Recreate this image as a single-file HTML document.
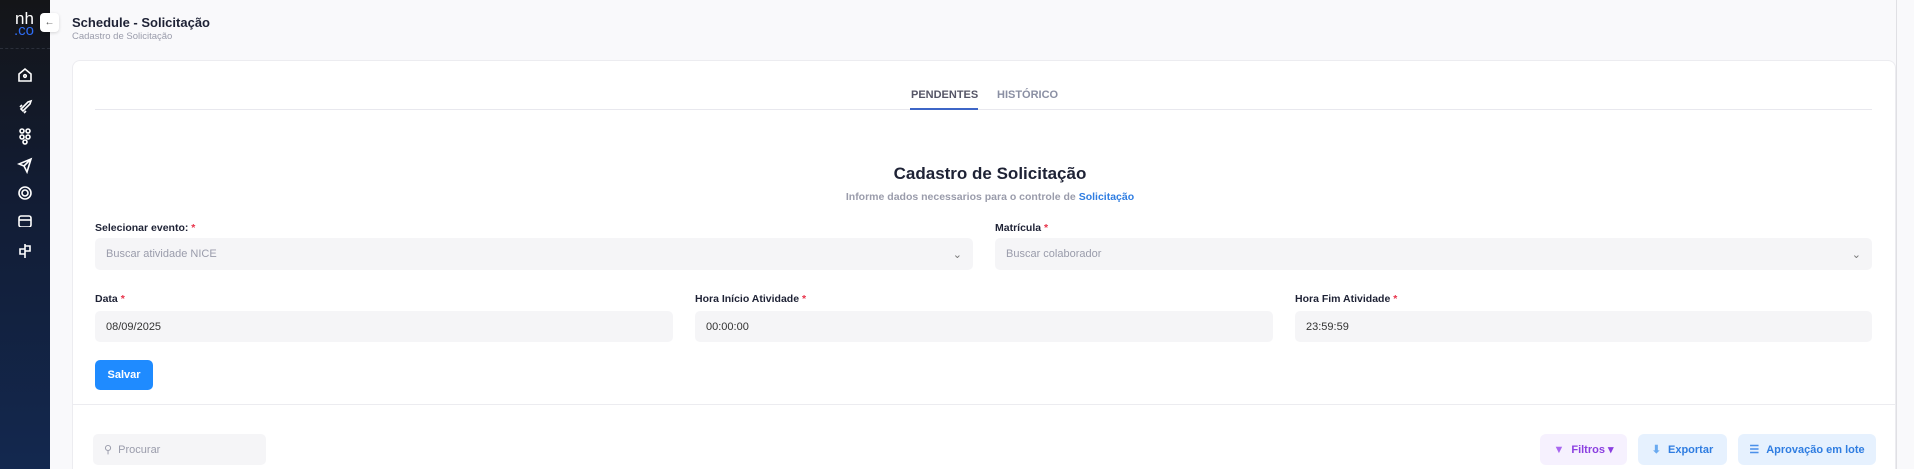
<!DOCTYPE html><html style="overflow:hidden;height:469px"><head><style>
*{box-sizing:border-box;margin:0;padding:0}
body{width:1914px;height:469px;overflow:hidden;background:#f9f9fb;font-family:"Liberation Sans",sans-serif;position:relative}
.sb{position:absolute;left:0;top:0;width:50px;height:469px;background:linear-gradient(#141518,#121c33 40%,#13284f)}
.ab{position:absolute}
.card{position:absolute;left:72px;top:60px;width:1824px;height:409px;background:#fff;border:1px solid #ececf0;border-bottom:none;border-radius:8px 8px 0 0}
.lbl{position:absolute;font-size:10.5px;color:#1e2235;font-weight:bold}
.lbl b{color:#e8334a}
.in{position:absolute;background:#f5f5f7;border-radius:5px;font-size:11px;color:#9a9cab;padding:0 11px;display:flex;align-items:center}
.btn{position:absolute;top:434px;height:31px;border-radius:6px;font-size:11px;font-weight:bold;display:flex;align-items:center;justify-content:center;gap:7px}
.ic{stroke:#fff;fill:none;stroke-width:1.6}
</style></head><body>
<div class="sb">
<div class="ab" style="left:15px;top:12px;color:#fff;font-size:17px;line-height:13px;">nh</div>
<div class="ab" style="left:14px;top:25px;color:#2f6df6;font-size:15px;line-height:12px">.co</div>
<div class="ab" style="left:0;top:48px;width:50px;border-top:1px dashed #2b2f3a"></div>
<svg class="ab" style="left:17px;top:67px" width="16" height="160">
<g class="ic"><path d="M2 7 L8 2 L14 7 V14 H2 Z"/><circle cx="8" cy="9" r="1.3"/>
<path d="M4 42 L11 35 L14 34 L13 37 L6 44 Z M5 38 L3 40 M9 44 L7 46"/>
<circle cx="5" cy="64" r="2"/><circle cx="11" cy="64" r="2"/><circle cx="5" cy="70" r="2"/><circle cx="11" cy="70" r="2"/><circle cx="8" cy="75" r="2"/>
<path d="M2 97 L14 92 L10 105 L7 99 Z M7 99 L14 92"/>
<circle cx="8" cy="126" r="6"/><circle cx="8" cy="126" r="3"/>
<rect x="2" y="149" width="12" height="11" rx="2"/><path d="M2 153 H14"/></g></svg>
<svg class="ab" style="left:17px;top:243px" width="16" height="16"><path class="ic" d="M8 1 V15 M8 3 H13 V8 H8 M8 6 H3 V11 H8"/></svg>
</div>
<div class="ab" style="left:40px;top:13px;width:19px;height:19px;background:#fff;border-radius:4px;box-shadow:0 1px 3px rgba(0,0,0,.15);font-size:10px;color:#555;text-align:center;line-height:19px">←</div>
<div class="ab" style="left:72px;top:15px;font-size:13px;font-weight:bold;color:#1e2235">Schedule - Solicitação</div>
<div class="ab" style="left:72px;top:31px;font-size:9.5px;color:#9a9cab">Cadastro de Solicitação</div>
<div class="card"></div>
<div class="ab" style="left:95px;top:109px;width:1777px;border-top:1px solid #e8e8ee"></div>
<div class="ab" style="left:911px;top:89px;font-size:11px;font-weight:bold;color:#556">PENDENTES</div>
<div class="ab" style="left:910px;top:108px;width:68px;border-top:2px solid #3e66c7"></div>
<div class="ab" style="left:997px;top:89px;font-size:11px;font-weight:bold;color:#8a8fa3">HISTÓRICO</div>
<div class="ab" style="left:0;width:1980px;top:164px;text-align:center;font-size:17px;font-weight:bold;color:#1e2235">Cadastro de Solicitação</div>
<div class="ab" style="left:0;width:1980px;top:191px;text-align:center;font-size:10.5px;color:#9a9cab;font-weight:bold">Informe dados necessarios para o controle de <span style="color:#2f7de1">Solicitação</span></div>
<div class="lbl" style="left:95px;top:222px">Selecionar evento: <b>*</b></div>
<div class="lbl" style="left:995px;top:222px">Matrícula <b>*</b></div>
<div class="in" style="left:95px;top:238px;width:878px;height:32px">Buscar atividade NICE<span style="margin-left:auto;color:#777">⌄</span></div>
<div class="in" style="left:995px;top:238px;width:877px;height:32px">Buscar colaborador<span style="margin-left:auto;color:#777">⌄</span></div>
<div class="lbl" style="left:95px;top:293px">Data <b>*</b></div>
<div class="lbl" style="left:695px;top:293px">Hora Início Atividade <b>*</b></div>
<div class="lbl" style="left:1295px;top:293px">Hora Fim Atividade <b>*</b></div>
<div class="in" style="left:95px;top:311px;width:578px;height:31px;color:#333">08/09/2025</div>
<div class="in" style="left:695px;top:311px;width:578px;height:31px;color:#333">00:00:00</div>
<div class="in" style="left:1295px;top:311px;width:577px;height:31px;color:#333">23:59:59</div>
<div class="ab" style="left:95px;top:360px;width:58px;height:30px;background:#1f8bff;border-radius:5px;color:#fff;font-size:11px;font-weight:bold;text-align:center;line-height:30px">Salvar</div>
<div class="ab" style="left:73px;top:404px;width:1822px;border-top:1px solid #ececf0"></div>
<div class="in" style="left:93px;top:434px;width:173px;height:31px">⚲&nbsp;&nbsp;Procurar</div>
<div class="btn" style="left:1540px;width:87px;background:#f6f1fe;color:#8b3fe0"><span style="color:#a866f0">▼</span>Filtros ▾</div>
<div class="btn" style="left:1638px;width:89px;background:#e6f1fe;color:#2f7de1"><span style="color:#6aaaf0">⬇</span>Exportar</div>
<div class="btn" style="left:1738px;width:138px;background:#e6f1fe;color:#2f7de1"><span style="color:#4a90ea">☰</span>Aprovação em lote</div>
<div class="ab" style="left:1896px;top:0;width:1px;height:469px;background:#e0e0e4"></div>
</body></html>
